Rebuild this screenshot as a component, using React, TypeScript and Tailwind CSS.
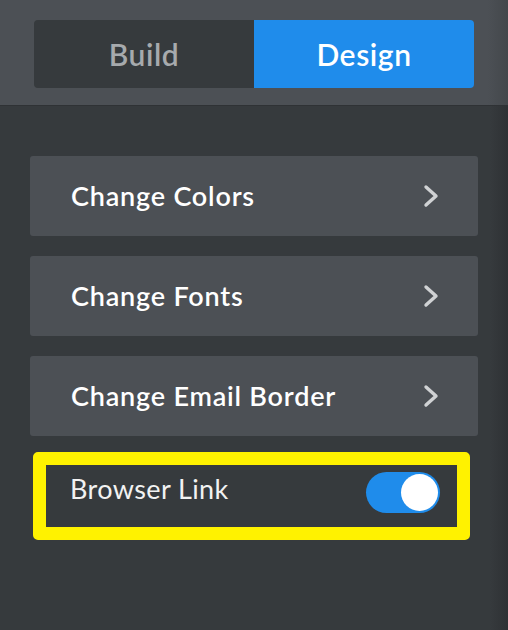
const items = ["Change Colors", "Change Fonts", "Change Email Border"];

const Chevron = () => (
  <svg width="16" height="24" viewBox="0 0 16 24" fill="none" className="text-[#d0d2d4]">
    <polyline
      points="3,3 13,12 3,21"
      stroke="currentColor"
      strokeWidth="3.4"
      strokeLinecap="round"
      strokeLinejoin="round"
    />
  </svg>
);

const App = () => {
  return (
    <div className="flex h-[630px] w-[508px] flex-col bg-[#363a3d] font-['Lato',sans-serif]">
      <div className="h-[106px] border-b border-[#2f3235] bg-[linear-gradient(to_right,#4c5055_96%,#43474b)] px-[34px] pt-[20px]">
        <div className="flex h-[68px] overflow-hidden rounded-[4px]">
          <button className="flex-1 bg-[#363a3d] text-[30px] font-semibold tracking-[0.6px] text-[#a7aaad]">
            Build
          </button>
          <button className="flex-1 bg-[#1f8ceb] text-[30px] font-semibold tracking-[0.6px] text-white">
            Design
          </button>
        </div>
      </div>

      <div className="flex flex-1 bg-[linear-gradient(to_right,#363a3d_96.5%,#2e3134)]">
        <div className="flex w-[478px] flex-col gap-[20px] pl-[30px] pt-[50px]">
          {items.map((label) => (
            <div
              key={label}
              className="flex h-[80px] items-center justify-between rounded-[3px] bg-[#4c5055] pl-[41px] pr-[39px]"
            >
              <span className="text-[27px] font-semibold tracking-[0.8px] text-white">{label}</span>
              <Chevron />
            </div>
          ))}
          <div className="-mt-[4px] ml-[3px] mr-[8px] rounded-[5px] border-[13px] border-[#fff200]">
            <div className="flex h-[62px] items-start justify-between pl-[24px] pr-[17px] pt-[7px]">
              <span className="text-[27px] leading-[34px] tracking-[0.4px] text-[#f2f2f2]">
                Browser Link
              </span>
              <div className="flex h-[41px] w-[74px] items-center justify-end rounded-full bg-[#1f8ceb] pr-[2px]">
                <div className="h-[37px] w-[37px] rounded-full bg-white" />
              </div>
            </div>
          </div>
        </div>
      </div>
    </div>
  );
};

export default App;
